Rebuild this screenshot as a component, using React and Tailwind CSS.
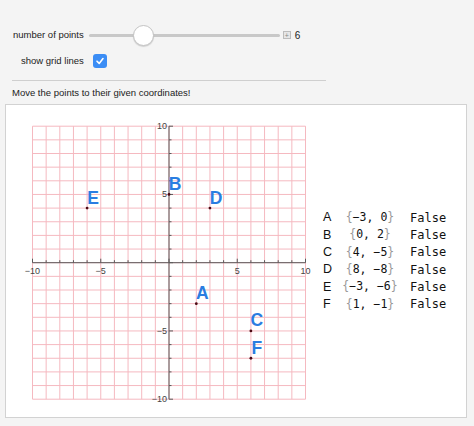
import React from 'react';

const S = 13.65;
const X = (x) => 163 + S * x;
const Y = (y) => 157.7 - S * y;

const points = [
  { name: 'A', x: 2, y: -3, target: '{−3, 0}' },
  { name: 'B', x: 0, y: 5, target: '{0, 2}' },
  { name: 'C', x: 6, y: -5, target: '{4, −5}' },
  { name: 'D', x: 3, y: 4, target: '{8, −8}' },
  { name: 'E', x: -6, y: 4, target: '{−3, −6}' },
  { name: 'F', x: 6, y: -7, target: '{1, −1}' },
];

const range = Array.from({ length: 21 }, (_, i) => i - 10);

function Chart() {
  return (
    <svg width="312" height="312" className="shrink-0">
      {/* grid */}
      {range.map((v) => (
        <g key={v}>
          <line x1={X(v)} y1={Y(10)} x2={X(v)} y2={Y(-10)} stroke="#f5b9c0" strokeWidth="1" />
          <line x1={X(-10)} y1={Y(v)} x2={X(10)} y2={Y(v)} stroke="#f5b9c0" strokeWidth="1" />
        </g>
      ))}
      {/* axes */}
      <line x1={X(-10)} y1={Y(0)} x2={X(10)} y2={Y(0)} stroke="#5a5a5a" strokeWidth="1" />
      <line x1={X(0)} y1={Y(10)} x2={X(0)} y2={Y(-10)} stroke="#5a5a5a" strokeWidth="1" />
      {range.map((v) => {
        const major = v % 5 === 0;
        const len = major ? 4 : 2.5;
        return (
          <g key={'t' + v}>
            <line x1={X(v)} y1={Y(0)} x2={X(v)} y2={Y(0) - len} stroke="#5a5a5a" strokeWidth="1" />
            <line x1={X(0)} y1={Y(v)} x2={X(0) + len} y2={Y(v)} stroke="#5a5a5a" strokeWidth="1" />
          </g>
        );
      })}
      {[-10, -5, 5, 10].map((v) => (
        <g key={'l' + v} fontSize="9" fill="#444" fontFamily="Liberation Sans, Arial, sans-serif">
          <text x={X(v)} y={Y(0) + 11} textAnchor="middle">{v < 0 ? '−' + -v : v}</text>
          <text x={X(0) - 2} y={Y(v) + 3} textAnchor="end">{v < 0 ? '−' + -v : v}</text>
        </g>
      ))}
      {/* points */}
      {points.map((p) => (
        <g key={p.name}>
          <circle cx={X(p.x)} cy={Y(p.y)} r="1.4" fill="#4a0a14" />
          <text
            x={X(p.x) + 6}
            y={Y(p.y) - 4.5}
            textAnchor="middle"
            fontSize="17.5"
            fontWeight="bold"
            fill="#2a7de1"
            fontFamily="Liberation Sans, Arial, sans-serif"
          >
            {p.name}
          </text>
        </g>
      ))}
    </svg>
  );
}

export default function App() {
  return (
    <div className="w-[474px] h-[426px] bg-[#f4f4f4] font-['Liberation_Sans',Arial,sans-serif] text-[#222] pt-[26px] overflow-hidden">
      <div className="flex items-center h-[18px] pl-[13px] text-[9.5px]">
        <span>number of points</span>
        <div className="relative ml-[5px] w-[191px] h-[3px] bg-[#c8c8c8] rounded">
          <div className="absolute left-[44px] top-[-9px] w-[21px] h-[21px] rounded-full bg-white border border-[#c4c4c4] shadow-[0_1px_1px_rgba(0,0,0,0.15)]" />
        </div>
        <div className="ml-[3px] w-[8px] h-[8px] border border-[#bcbcbc] bg-[#e6e6e6] flex items-center justify-center text-[7px] leading-none text-[#888]">+</div>
        <span className="ml-[4px] text-[10px]">6</span>
      </div>
      <div className="flex items-center h-[16px] mt-[9px] pl-[21px] text-[9.5px]">
        <span>show grid lines</span>
        <div className="ml-[9px] w-[14px] h-[14px] rounded-[3px] bg-[#3b8df5] flex items-center justify-center">
          <svg width="10" height="10" viewBox="0 0 10 10">
            <path d="M2 5.2 L4.2 7.4 L8 2.6" fill="none" stroke="white" strokeWidth="1.6" strokeLinecap="round" strokeLinejoin="round" />
          </svg>
        </div>
      </div>
      <div className="ml-[12px] w-[314px] h-px bg-[#cfcfcf] mt-[11px]" />
      <div className="pl-[12px] mt-[6px] h-[12px] leading-[12px] text-[9.5px]">Move the points to their given coordinates!</div>
      <div className="ml-[5px] mt-[5px] w-[462px] h-[314px] bg-white border border-[#d2d2d2] flex items-center">
        <Chart />
        <div className="ml-[5px] flex flex-col text-[#111]">
          {points.map((p) => (
            <div key={p.name} className="flex items-center h-[17.4px]">
              <span className="w-[14px] text-[12.5px]">{p.name}</span>
              <span className="w-[66px] text-center font-['DejaVu_Sans_Mono',monospace] text-[11.5px]">
                <span className="text-[#999]">{'{'}</span>
                {p.target.slice(1, -1)}
                <span className="text-[#999]">{'}'}</span>
              </span>
              <span className="ml-[7px] font-['DejaVu_Sans_Mono',monospace] text-[12px]">False</span>
            </div>
          ))}
        </div>
      </div>
    </div>
  );
}
